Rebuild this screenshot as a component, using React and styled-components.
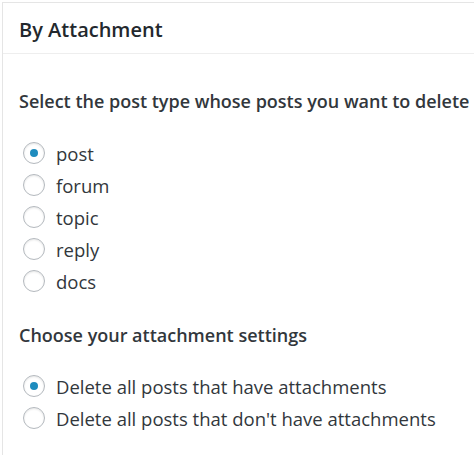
import React from "react";
import styled, { createGlobalStyle } from "styled-components";

const Global = createGlobalStyle`
  html, body { margin: 0; padding: 0; background: #fff; }
  body { font-family: "Open Sans", "Liberation Sans", sans-serif; color: #444; }
`;

const Panel = styled.div`
  margin: 2px 0 0 2px;
  border: 1px solid #e5e5e5;
  border-right: none;
  border-bottom: none;
  background: #fff;
  height: 453px;
  box-sizing: border-box;
`;

const Header = styled.h2`
  margin: 0;
  height: 51px;
  box-sizing: border-box;
  padding: 3px 0 0 16px;
  display: flex;
  align-items: center;
  border-bottom: 1px solid #eee;
  font-size: 20px;
  font-weight: 600;
  color: #23282d;
`;

const Body = styled.div`
  padding: 0 0 0 16px;
`;

const Section = styled.div`
  margin-top: ${(p) => p.$top}px;
`;

const Question = styled.h4`
  margin: 0;
  font-size: 18px;
  font-weight: 600;
  line-height: 24px;
  color: #32373c;
  white-space: nowrap;
`;

const List = styled.div`
  margin-top: ${(p) => p.$gap}px;
  display: flex;
  flex-direction: column;
`;

const Option = styled.label`
  display: flex;
  align-items: center;
  height: 32px;
  font-size: 18.5px;
  color: #32373c;
  white-space: nowrap;
`;

const Radio = styled.span`
  width: 22px;
  height: 22px;
  box-sizing: border-box;
  border-radius: 50%;
  border: 1px solid #b4b9be;
  box-shadow: inset 0 1px 2px rgba(0, 0, 0, 0.1);
  margin: 0 11px 0 4px;
  display: flex;
  align-items: center;
  justify-content: center;
  flex-shrink: 0;
  &::after {
    content: "";
    width: 8px;
    height: 8px;
    border-radius: 50%;
    background: ${(p) => (p.$checked ? "#1e8cbe" : "transparent")};
  }
`;

function Choice({ label, checked }) {
  return (
    <Option>
      <Radio $checked={checked} />
      {label}
    </Option>
  );
}

export default function App() {
  return (
    <>
      <Global />
      <Panel>
        <Header>By Attachment</Header>
        <Body>
          <Section $top={35}>
            <Question>Select the post type whose posts you want to delete</Question>
            <List $gap={24}>
              <Choice label="post" checked />
              <Choice label="forum" />
              <Choice label="topic" />
              <Choice label="reply" />
              <Choice label="docs" />
            </List>
          </Section>
          <Section $top={26}>
            <Question>Choose your attachment settings</Question>
            <List $gap={23}>
              <Choice label="Delete all posts that have attachments" checked />
              <Choice label="Delete all posts that don't have attachments" />
            </List>
          </Section>
        </Body>
      </Panel>
    </>
  );
}
